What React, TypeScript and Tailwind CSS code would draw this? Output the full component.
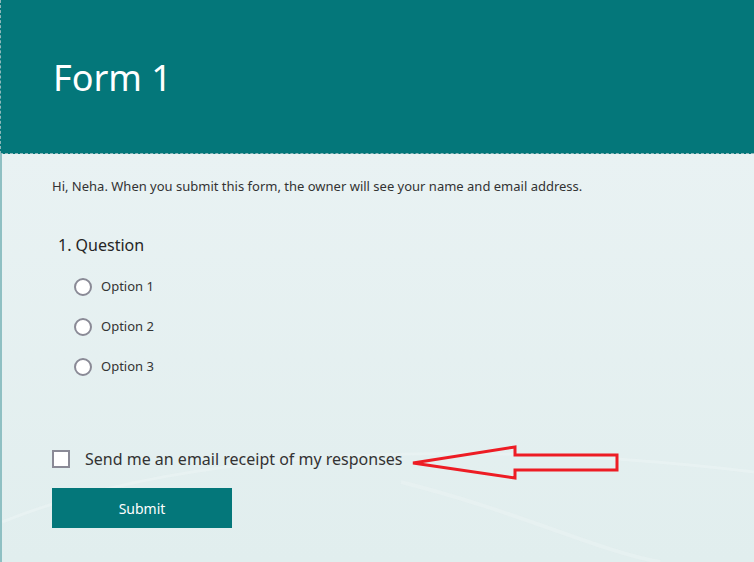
import React, { useState } from "react";

const font = { fontFamily: '"Segoe UI", "Noto Sans", "Open Sans", sans-serif' };

const options = ["Option 1", "Option 2", "Option 3"];

function Radio({ label }: { label: string }) {
  return (
    <label className="flex items-center h-[40px] cursor-pointer">
      <span className="w-[18px] h-[18px] rounded-full border-2 border-[#8a8a96] bg-white" />
      <span className="ml-[9px] text-[13px] text-[#333]">{label}</span>
    </label>
  );
}

export default function App() {
  const [receipt, setReceipt] = useState(false);

  return (
    <div className="relative w-full h-[562px] overflow-hidden bg-[#e6f0f1]" style={font}>
      {/* header */}
      <div className="h-[154px] bg-[#04777a] border-l border-b border-dashed border-l-[#8fb8ba] border-b-[#8fb8ba] px-[52px] pt-[52px]">
        <h1 className="text-[36px] leading-[52px] text-white font-normal">Form 1</h1>
      </div>

      {/* body */}
      <div className="relative h-[408px] border-l-2 border-[#8fc0c3] bg-gradient-to-b from-[#e9f2f3] to-[#e1eeee]">
        <svg className="absolute left-0 bottom-0 w-full h-[160px]" viewBox="0 0 754 160" preserveAspectRatio="none">
          <path d="M0 120 C 200 40, 500 40, 754 70" stroke="#edf5f5" strokeWidth="3" fill="none" opacity="0.5" />
          <path d="M400 80 C 520 110, 600 150, 660 160" stroke="#ecf4f4" strokeWidth="4" fill="none" opacity="0.5" />
        </svg>

        <div className="relative px-[50px] pt-[23px]">
          <p className="text-[13px] leading-[18px] text-[#333]">
            Hi, Neha. When you submit this form, the owner will see your name and email address.
          </p>

          <div className="mt-[39px] pl-[6px]">
            <div className="text-[16px] leading-[22px] text-[#252525]">1. Question</div>
            <div className="mt-[11px] pl-[16px]">
              {options.map((o) => (
                <Radio key={o} label={o} />
              ))}
            </div>
          </div>

          <label className="mt-[61px] flex items-center cursor-pointer">
            <input
              type="checkbox"
              checked={receipt}
              onChange={() => setReceipt(!receipt)}
              className="appearance-none w-[18px] h-[18px] border-2 border-[#8a8a96] bg-white"
            />
            <span className="ml-[15px] text-[16px] leading-[22px] text-[#333]">
              Send me an email receipt of my responses
            </span>
          </label>

          <button className="mt-[18px] w-[180px] h-[40px] bg-[#04777a] text-white text-[14px]">
            Submit
          </button>
        </div>
      </div>

      {/* annotation arrow */}
      <svg className="absolute left-0 top-0 pointer-events-none" width="754" height="562">
        <polygon
          points="413,463 515,447 515,455 617,455 617,470 515,470 515,478"
          fill="none"
          stroke="#ed1c24"
          strokeWidth="3"
          strokeLinejoin="miter"
        />
      </svg>
    </div>
  );
}
